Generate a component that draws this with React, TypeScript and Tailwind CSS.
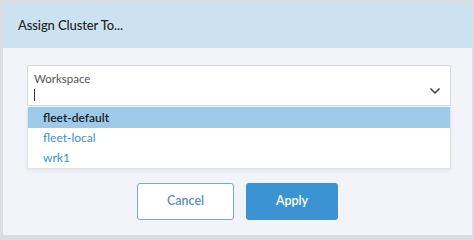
import { ChevronDown } from "lucide-react";

const options = ["fleet-default", "fleet-local", "wrk1"];

export default function App() {
  return (
    <div
      className="w-[474px] h-[240px] bg-[#dcdde2] pt-[3px] pl-[3px] pr-[2px] pb-[5px]"
      style={{ fontFamily: "Lato, 'Open Sans', sans-serif" }}
    >
      <div className="h-full flex flex-col bg-[#f3f4f9]">
        <div className="h-[45px] bg-[#cde2f1] flex items-center pl-[15px]">
          <h1 className="text-[13px] text-[#222] font-medium tracking-[-0.1px]">
            Assign Cluster To...
          </h1>
        </div>

        <div className="pt-[17px] pl-[24px] pr-[21px]">
          <div className="bg-white border border-[#d5d8de] rounded-t-[2px] h-[41px] flex items-start justify-between pl-[6px] pr-[7px] pt-[6px]">
            <div className="flex flex-col">
              <span className="text-[11.5px] text-[#555] leading-[14px]">Workspace</span>
              <span className="w-[1px] h-[12px] bg-[#333] mt-[3px]" />
            </div>
            <ChevronDown className="w-4 h-4 text-[#444] mt-[11px]" strokeWidth={2.5} />
          </div>

          <div className="bg-white border-x border-b border-[#e2e4ea] mt-[1px] shadow-[0_2px_4px_rgba(0,0,0,0.06)]">
            {options.map((o, i) => (
              <div
                key={o}
                className={
                  i === 0
                    ? "h-[21px] flex items-center pl-[15px] bg-[#9ecaea] text-[12px] text-[#1c1c1c] font-semibold"
                    : "h-[20px] flex items-center pl-[15px] text-[12px] text-[#3d8fcf]"
                }
              >
                {o}
              </div>
            ))}
          </div>
        </div>

        <div className="flex justify-center gap-[12px] mt-[14px]">
          <button className="w-[97px] h-[37px] rounded-[3px] border border-[#76a9d2] bg-white text-[12.5px] font-semibold text-[#5a8fbe]">
            Cancel
          </button>
          <button className="w-[92px] h-[37px] rounded-[3px] bg-[#3b93d3] text-[12.5px] font-semibold text-white">
            Apply
          </button>
        </div>
      </div>
    </div>
  );
}
